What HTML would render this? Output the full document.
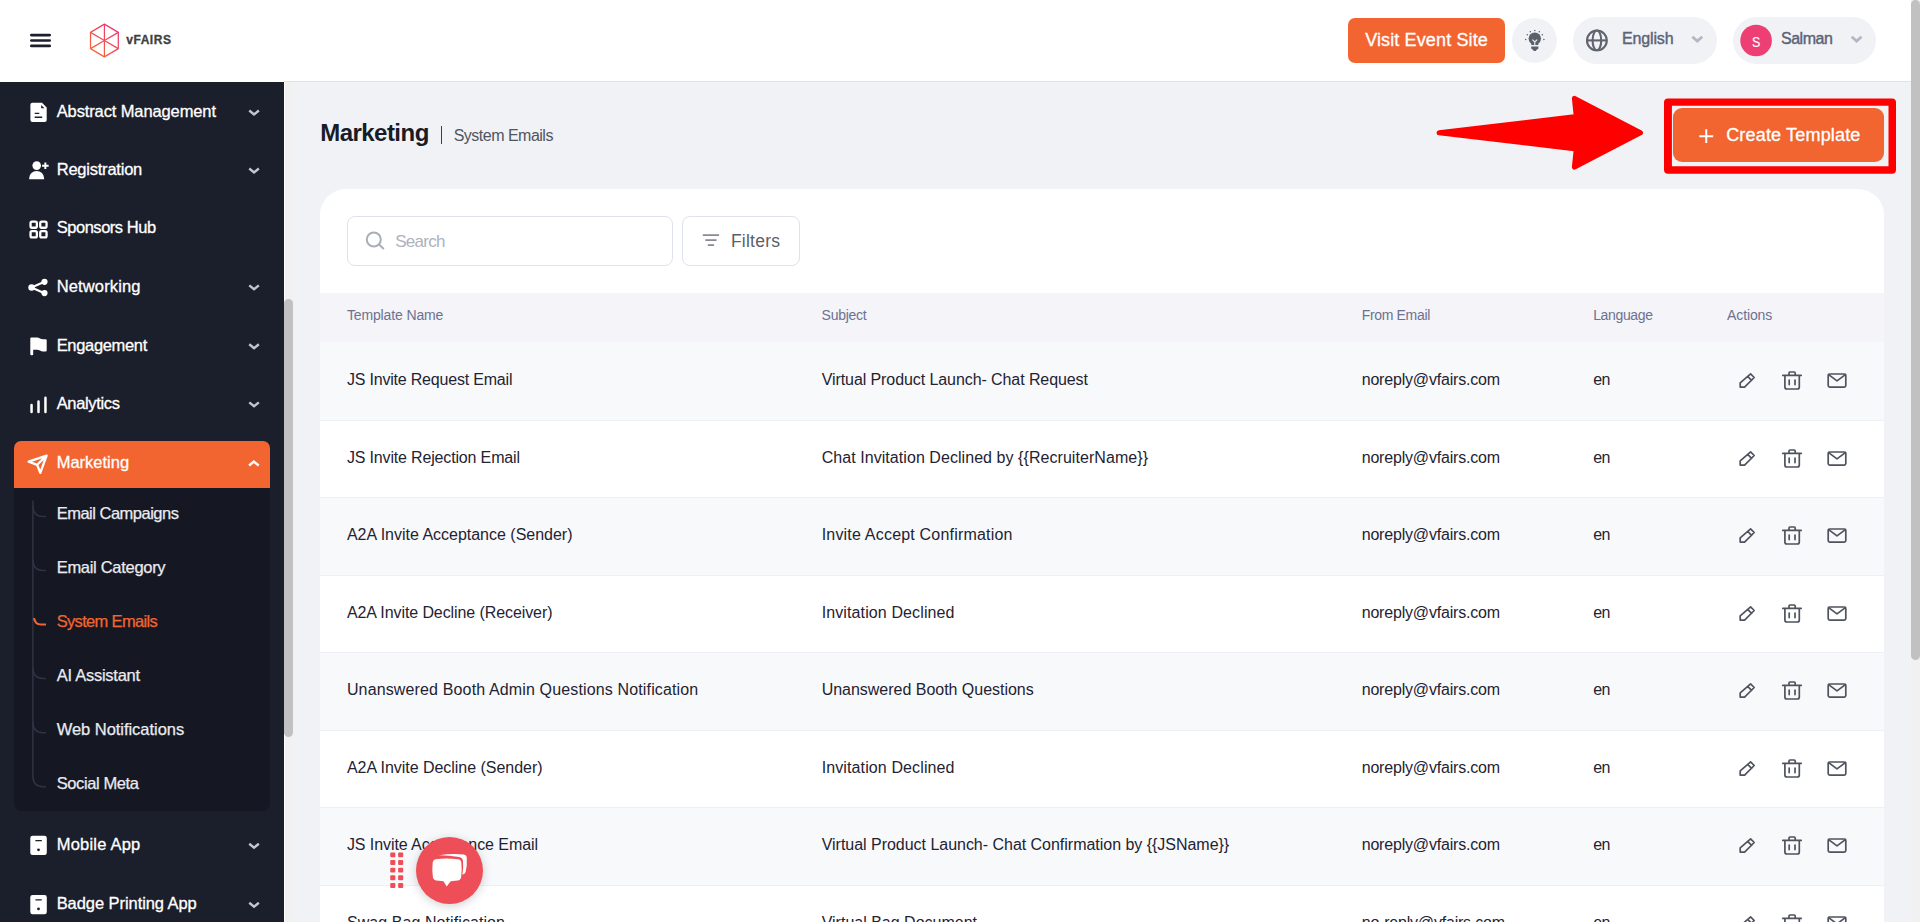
<!DOCTYPE html>
<html lang="en">
<head>
<meta charset="utf-8">
<title>Marketing | System Emails</title>
<style>
*{box-sizing:border-box;margin:0;padding:0}
html,body{width:1920px;height:922px;overflow:hidden;background:#f1f2f6;font-family:"Liberation Sans",sans-serif}
.abs,.t,.row{position:absolute}
.t{white-space:pre;display:block}
#page{position:relative;width:1920px;height:922px;overflow:hidden}
#header{left:0;top:0;width:1911px;height:82px;background:#fff}
#hborder{left:284px;top:81px;width:1627px;height:1px;background:#dfe2e8}
#sidebar{left:0;top:82px;width:284px;height:840px;background:#1b1e2b}
#sbtrack{left:284px;top:82px;width:9px;height:840px;background:#f1f1f1;border-left:1px solid #fff}
#sbthumb{left:284.4px;top:299px;width:8.6px;height:438px;background:#c1c1c1;border-radius:4.5px}
#vtrack{left:1911px;top:0;width:9px;height:922px;background:#f1f1f1}
#vthumb{left:1911px;top:0;width:9px;height:660px;background:#c1c1c1;border-radius:4.5px}
#mkt{left:14px;top:441px;width:256px;height:47px;background:#f26531;border-radius:7px 7px 0 0}
#submenu{left:14px;top:488px;width:256px;height:323px;background:#151823;border-radius:0 0 8px 8px}
#card{left:320px;top:189px;width:1564px;height:800px;background:#fff;border-radius:26px 26px 0 0}
#thead{left:320px;top:293px;width:1564px;height:49px;background:#f4f4f9}
.row{left:320px;width:1564px;border-top:1px solid #eef0f5}
#search{left:347px;top:216px;width:326px;height:50px;border:1px solid #dfe2ea;border-radius:8px;background:#fff}
#filters{left:682px;top:216px;width:118px;height:50px;border:1px solid #dfe2ea;border-radius:8px;background:#fff}
#visit{left:1348px;top:18px;width:157px;height:45px;background:#f26531;border-radius:7px}
#bulb{left:1512px;top:18px;width:45px;height:45px;background:#f1f2f6;border-radius:50%}
#lang{left:1573px;top:17px;width:144px;height:47px;background:#f1f2f6;border-radius:24px}
#user{left:1733px;top:17px;width:143px;height:47px;background:#f1f2f6;border-radius:24px}
#avatar{left:1740px;top:25px;width:32px;height:32px;background:#ee3f75;border-radius:50%}
#redbox{left:1664px;top:98px;width:232px;height:76px;border:8px solid #fe0000;border-radius:3px}
#create{left:1673px;top:108px;width:211px;height:54px;background:#f26531;border-radius:9px}
#sep{left:441px;top:126px;width:1px;height:18px;background:#3c3f4a}
#chat{left:416px;top:837px;width:67px;height:67px;background:#ee4e57;border-radius:50%;box-shadow:0 2px 10px rgba(40,40,60,.22)}
svg{position:absolute;overflow:visible}
</style>
</head>
<body>
<div id="page">
<!-- main scroll area background -->
<div class="abs" id="card"></div>
<div class="abs" id="thead"></div>
<div class="row" style="top:342px;height:78px;background:#f8f9fb;border-top:0;"></div>
<div class="row" style="top:420px;height:77px;background:#ffffff;"></div>
<div class="row" style="top:497px;height:78px;background:#f8f9fb;"></div>
<div class="row" style="top:575px;height:77px;background:#ffffff;"></div>
<div class="row" style="top:652px;height:78px;background:#f8f9fb;"></div>
<div class="row" style="top:730px;height:77px;background:#ffffff;"></div>
<div class="row" style="top:807px;height:78px;background:#f8f9fb;"></div>
<div class="row" style="top:885px;height:77px;background:#ffffff;"></div>

<div class="abs" id="search"></div>
<div class="abs" id="filters"></div>
<div class="abs" id="sep"></div>
<div class="abs" id="create"></div>

<!-- sidebar -->
<div class="abs" id="sidebar"></div>
<div class="abs" id="sbtrack"></div>
<div class="abs" id="sbthumb"></div>
<div class="abs" id="mkt"></div>
<div class="abs" id="submenu"></div>

<!-- header -->
<div class="abs" id="header"></div>
<div class="abs" id="hborder"></div>
<div class="abs" id="visit"></div>
<div class="abs" id="bulb"></div>
<div class="abs" id="lang"></div>
<div class="abs" id="user"></div>
<div class="abs" id="vtrack"></div>
<div class="abs" id="vthumb"></div>

<svg width="1920" height="922" viewBox="0 0 1920 922" style="left:0;top:0">
<defs><linearGradient id="lg" gradientUnits="userSpaceOnUse" x1="118" y1="26" x2="91" y2="55"><stop offset="0" stop-color="#ed2d7b"/><stop offset="1" stop-color="#f96c2c"/></linearGradient></defs>
<line x1="31.3" y1="35.1" x2="49.7" y2="35.1" stroke="#1b1e2b" stroke-width="2.6" stroke-linecap="round"/>
<line x1="31.3" y1="40.5" x2="49.7" y2="40.5" stroke="#1b1e2b" stroke-width="2.6" stroke-linecap="round"/>
<line x1="31.3" y1="45.9" x2="49.7" y2="45.9" stroke="#1b1e2b" stroke-width="2.6" stroke-linecap="round"/>
<g fill="none" stroke="url(#lg)" stroke-width="1.25" stroke-linejoin="round">
<polygon points="104.4,24.1 118.3,32.4 118.3,48.6 104.4,56.9 90.5,48.6 90.5,32.4"/>
<line x1="104.4" y1="40.5" x2="104.4" y2="24.1"/>
<line x1="104.4" y1="40.5" x2="118.3" y2="32.4"/>
<line x1="104.4" y1="40.5" x2="118.3" y2="48.6"/>
<line x1="104.4" y1="40.5" x2="104.4" y2="56.9"/>
<line x1="104.4" y1="40.5" x2="90.5" y2="48.6"/>
<line x1="104.4" y1="40.5" x2="90.5" y2="32.4"/>
</g>
<circle cx="1534.8" cy="38.6" r="6.2" fill="#5b606b"/>
<path d="M1531.3 43 h7 v2.2 h-7z" fill="#5b606b"/>
<path d="M1531.2 46.4 h7.2 v1.6 q0 1.2 -1.4 1.6 l-1.4 1.4 h-1.6 l-1.4 -1.4 q-1.4 -0.4 -1.4 -1.6z" fill="#5b606b"/>
<path d="M1532.4 39.6 l2.4 2.3 l2.4 -2.3 M1534.8 41.9 v3.6" fill="none" stroke="#f1f2f6" stroke-width="1.1"/>
<rect x="1530.6" y="45.05" width="8.4" height="0.9" fill="#f1f2f6"/>
<circle cx="1525.7" cy="39.4" r="0.75" fill="#5b606b"/>
<circle cx="1527.3" cy="34.8" r="0.75" fill="#5b606b"/>
<circle cx="1530.3" cy="31.7" r="0.75" fill="#5b606b"/>
<circle cx="1534.8" cy="30.6" r="0.75" fill="#5b606b"/>
<circle cx="1539.3" cy="31.7" r="0.75" fill="#5b606b"/>
<circle cx="1542.3" cy="34.8" r="0.75" fill="#5b606b"/>
<circle cx="1543.9" cy="39.4" r="0.75" fill="#5b606b"/>
<g fill="none" stroke="#5f646f" stroke-width="2.1"><circle cx="1596.9" cy="40.4" r="9.9"/><ellipse cx="1596.9" cy="40.4" rx="4.3" ry="9.9"/><line x1="1587" y1="40.4" x2="1606.8" y2="40.4"/></g>
<circle cx="1756.1" cy="40.5" r="15.8" fill="#ee3f75"/>
<path d="M1692.35 36.70 L1697.30 41.10 L1702.25 36.70" fill="none" stroke="#b1b7c3" stroke-width="2.7" stroke-linecap="butt" stroke-linejoin="miter"/>
<path d="M1851.65 36.70 L1856.60 41.10 L1861.55 36.70" fill="none" stroke="#b1b7c3" stroke-width="2.7" stroke-linecap="butt" stroke-linejoin="miter"/>
<path d="M32.4 102.8 H42 L46.7 107.6 V120 q0 2 -2 2 H32.4 q-2 0 -2 -2 V104.8 q0 -2 2 -2z" fill="#ffffff"/>
<path d="M41.2 105 V108.3 H44.5z" fill="#1b1e2b"/>
<path d="M34.7 113.4 H39.3 M34.7 117.3 H42.2" stroke="#1b1e2b" stroke-width="1.4" stroke-linecap="butt"/>
<circle cx="36.7" cy="165.6" r="4.3" fill="#ffffff"/>
<path d="M29.2 179.3 v-1.2 a7.45 7.1 0 0 1 14.9 0 v1.2z" fill="#ffffff"/>
<path d="M45.35 162.4 v6.6 M42.05 165.7 h6.6" stroke="#ffffff" stroke-width="2" stroke-linecap="butt"/>
<rect x="30.55" y="221.55" width="6.3" height="6.2" rx="1.4" fill="none" stroke="#ffffff" stroke-width="2.3"/>
<rect x="30.55" y="231.2" width="6.3" height="6.2" rx="1.4" fill="none" stroke="#ffffff" stroke-width="2.3"/>
<rect x="40.25" y="221.55" width="6.3" height="6.2" rx="1.4" fill="none" stroke="#ffffff" stroke-width="2.3"/>
<rect x="40.25" y="231.2" width="6.3" height="6.2" rx="1.4" fill="none" stroke="#ffffff" stroke-width="2.3"/>
<path d="M44.5 281.7 L31.5 287.45 L44.5 293.2" fill="none" stroke="#ffffff" stroke-width="2.2" stroke-linejoin="round"/>
<circle cx="31.6" cy="287.45" r="3.3" fill="#ffffff"/><circle cx="44.5" cy="281.8" r="3.1" fill="#ffffff"/><circle cx="44.5" cy="293.1" r="3.1" fill="#ffffff"/>
<path d="M30.3 338.6 q0 -1.1 1.1 -1.1 H37 q1.6 0 3 0.9 q1.4 0.8 3 0.8 H45.6 q1.1 0 1.1 1.1 V350.4 q0 1.1 -1.1 1.1 H43 q-1.6 0 -3 -0.9 q-1.4 -0.9 -3 -0.9 H33.2 V354.2 q0 1.1 -1.1 1.1 h-0.7 q-1.1 0 -1.1 -1.1z" fill="#ffffff"/>
<path d="M31.55 405 V412.1 M38.5 401.4 V412.1 M45.45 397.7 V412.1" stroke="#ffffff" stroke-width="2.5" stroke-linecap="round"/>
<path d="M46.6 455.6 L28.6 461.6 L37.2 464.8 L40.3 472.9 Z M46.6 455.6 L37.2 464.8" fill="none" stroke="#ffffff" stroke-width="2.3" stroke-linejoin="round" stroke-linecap="round"/>
<rect x="30.3" y="835.8" width="16.5" height="19.3" rx="2.3" fill="#ffffff"/>
<line x1="35.9" y1="840.7" x2="41.3" y2="840.7" stroke="#1b1e2b" stroke-width="1.3" stroke-linecap="round"/>
<circle cx="38.5" cy="849.8" r="1.4" fill="#1b1e2b"/>
<rect x="30.3" y="894.9" width="16.5" height="19.3" rx="2.3" fill="#ffffff"/>
<line x1="35.9" y1="899.8000000000001" x2="41.3" y2="899.8000000000001" stroke="#1b1e2b" stroke-width="1.3" stroke-linecap="round"/>
<circle cx="38.5" cy="908.9" r="1.4" fill="#1b1e2b"/>
<path d="M249.25 110.50 L254.05 114.40 L258.85 110.50" fill="none" stroke="#c3c6ce" stroke-width="2.4" stroke-linecap="butt" stroke-linejoin="miter"/>
<path d="M249.25 168.50 L254.05 172.40 L258.85 168.50" fill="none" stroke="#c3c6ce" stroke-width="2.4" stroke-linecap="butt" stroke-linejoin="miter"/>
<path d="M249.25 285.40 L254.05 289.30 L258.85 285.40" fill="none" stroke="#c3c6ce" stroke-width="2.4" stroke-linecap="butt" stroke-linejoin="miter"/>
<path d="M249.25 344.30 L254.05 348.20 L258.85 344.30" fill="none" stroke="#c3c6ce" stroke-width="2.4" stroke-linecap="butt" stroke-linejoin="miter"/>
<path d="M249.25 402.40 L254.05 406.30 L258.85 402.40" fill="none" stroke="#c3c6ce" stroke-width="2.4" stroke-linecap="butt" stroke-linejoin="miter"/>
<path d="M249.25 843.70 L254.05 847.60 L258.85 843.70" fill="none" stroke="#c3c6ce" stroke-width="2.4" stroke-linecap="butt" stroke-linejoin="miter"/>
<path d="M249.25 902.80 L254.05 906.70 L258.85 902.80" fill="none" stroke="#c3c6ce" stroke-width="2.4" stroke-linecap="butt" stroke-linejoin="miter"/>
<path d="M249.10 465.55 L253.90 461.65 L258.70 465.55" fill="none" stroke="#ffffff" stroke-width="2.4" stroke-linecap="butt" stroke-linejoin="miter"/>
<path d="M32.9 500.5 V776" fill="none" stroke="#2f3342" stroke-width="1.5"/>
<path d="M32.9 505.6 q0 11 10 11 H46" fill="none" stroke="#2f3342" stroke-width="1.5"/>
<path d="M32.9 559.6 q0 11 10 11 H46" fill="none" stroke="#2f3342" stroke-width="1.5"/>
<path d="M32.9 667.6 q0 11 10 11 H46" fill="none" stroke="#2f3342" stroke-width="1.5"/>
<path d="M32.9 721.7 q0 11 10 11 H46" fill="none" stroke="#2f3342" stroke-width="1.5"/>
<path d="M32.9 775.8 q0 11 10 11 H46" fill="none" stroke="#2f3342" stroke-width="1.5"/>
<path d="M34 618.1 q1.2 6.4 7 6.4 H46" fill="none" stroke="#f26531" stroke-width="2.2"/>
<g fill="none" stroke="#a9aebb" stroke-width="2" stroke-linecap="round"><circle cx="373.8" cy="239.5" r="7"/><line x1="379" y1="244.6" x2="383.3" y2="248.5"/></g>
<g stroke="#7c7f88" stroke-width="1.6"><line x1="702.8" y1="235.1" x2="719.1" y2="235.1"/><line x1="705.3" y1="240.1" x2="716.6" y2="240.1"/><line x1="707.8" y1="245.1" x2="714.1" y2="245.1"/></g>
<path d="M1706.25 129.2 V143.1 M1699.3 136.15 H1713.2" stroke="#fff" stroke-width="2"/>
<path d="M1439.2 132.75 L1576.35 116.6 L1574.5 98.45 L1640.4 132.75 L1574.5 167.05 L1576.35 148.9 Z" fill="#fe0000" stroke="#fe0000" stroke-width="5.2" stroke-linejoin="round"/>
<path fill-rule="evenodd" fill="#fe0000" d="M1668 98.4 H1892 q4 0 4 4 V169.8 q0 4 -4 4 H1668 q-4 0 -4 -4 V102.4 q0 -4 4 -4z M1671.9 105.7 V166.2 H1888.5 V105.7z"/>
<g transform="translate(0,0)" fill="none" stroke="#4f535e" stroke-width="1.7" stroke-linejoin="round" stroke-linecap="round">
<path d="M1750.6 373.9 L1754.2 377.5 L1744.6 387.1 H1740.2 V382.9 Z M1747.9 376.7 L1751.6 380.3"/>
<path d="M1782.8 375.4 H1801.2 M1789 375.2 V373.0 q0 -1 1 -1 H1794.2 q1 0 1 1 V375.2 M1784.9 375.6 V387 q0 2 2 2 H1797.3 q2 0 2 -2 V375.6 M1789.2 380 V384.6 M1795 380 V384.6"/>
<rect x="1828.2" y="374" width="17.6" height="13.2" rx="1.6"/><path d="M1828.6 374.6 L1837 380.9 L1845.4 374.6"/>
</g>
<g transform="translate(0,78)" fill="none" stroke="#4f535e" stroke-width="1.7" stroke-linejoin="round" stroke-linecap="round">
<path d="M1750.6 373.9 L1754.2 377.5 L1744.6 387.1 H1740.2 V382.9 Z M1747.9 376.7 L1751.6 380.3"/>
<path d="M1782.8 375.4 H1801.2 M1789 375.2 V373.0 q0 -1 1 -1 H1794.2 q1 0 1 1 V375.2 M1784.9 375.6 V387 q0 2 2 2 H1797.3 q2 0 2 -2 V375.6 M1789.2 380 V384.6 M1795 380 V384.6"/>
<rect x="1828.2" y="374" width="17.6" height="13.2" rx="1.6"/><path d="M1828.6 374.6 L1837 380.9 L1845.4 374.6"/>
</g>
<g transform="translate(0,155)" fill="none" stroke="#4f535e" stroke-width="1.7" stroke-linejoin="round" stroke-linecap="round">
<path d="M1750.6 373.9 L1754.2 377.5 L1744.6 387.1 H1740.2 V382.9 Z M1747.9 376.7 L1751.6 380.3"/>
<path d="M1782.8 375.4 H1801.2 M1789 375.2 V373.0 q0 -1 1 -1 H1794.2 q1 0 1 1 V375.2 M1784.9 375.6 V387 q0 2 2 2 H1797.3 q2 0 2 -2 V375.6 M1789.2 380 V384.6 M1795 380 V384.6"/>
<rect x="1828.2" y="374" width="17.6" height="13.2" rx="1.6"/><path d="M1828.6 374.6 L1837 380.9 L1845.4 374.6"/>
</g>
<g transform="translate(0,233)" fill="none" stroke="#4f535e" stroke-width="1.7" stroke-linejoin="round" stroke-linecap="round">
<path d="M1750.6 373.9 L1754.2 377.5 L1744.6 387.1 H1740.2 V382.9 Z M1747.9 376.7 L1751.6 380.3"/>
<path d="M1782.8 375.4 H1801.2 M1789 375.2 V373.0 q0 -1 1 -1 H1794.2 q1 0 1 1 V375.2 M1784.9 375.6 V387 q0 2 2 2 H1797.3 q2 0 2 -2 V375.6 M1789.2 380 V384.6 M1795 380 V384.6"/>
<rect x="1828.2" y="374" width="17.6" height="13.2" rx="1.6"/><path d="M1828.6 374.6 L1837 380.9 L1845.4 374.6"/>
</g>
<g transform="translate(0,310)" fill="none" stroke="#4f535e" stroke-width="1.7" stroke-linejoin="round" stroke-linecap="round">
<path d="M1750.6 373.9 L1754.2 377.5 L1744.6 387.1 H1740.2 V382.9 Z M1747.9 376.7 L1751.6 380.3"/>
<path d="M1782.8 375.4 H1801.2 M1789 375.2 V373.0 q0 -1 1 -1 H1794.2 q1 0 1 1 V375.2 M1784.9 375.6 V387 q0 2 2 2 H1797.3 q2 0 2 -2 V375.6 M1789.2 380 V384.6 M1795 380 V384.6"/>
<rect x="1828.2" y="374" width="17.6" height="13.2" rx="1.6"/><path d="M1828.6 374.6 L1837 380.9 L1845.4 374.6"/>
</g>
<g transform="translate(0,388)" fill="none" stroke="#4f535e" stroke-width="1.7" stroke-linejoin="round" stroke-linecap="round">
<path d="M1750.6 373.9 L1754.2 377.5 L1744.6 387.1 H1740.2 V382.9 Z M1747.9 376.7 L1751.6 380.3"/>
<path d="M1782.8 375.4 H1801.2 M1789 375.2 V373.0 q0 -1 1 -1 H1794.2 q1 0 1 1 V375.2 M1784.9 375.6 V387 q0 2 2 2 H1797.3 q2 0 2 -2 V375.6 M1789.2 380 V384.6 M1795 380 V384.6"/>
<rect x="1828.2" y="374" width="17.6" height="13.2" rx="1.6"/><path d="M1828.6 374.6 L1837 380.9 L1845.4 374.6"/>
</g>
<g transform="translate(0,465)" fill="none" stroke="#4f535e" stroke-width="1.7" stroke-linejoin="round" stroke-linecap="round">
<path d="M1750.6 373.9 L1754.2 377.5 L1744.6 387.1 H1740.2 V382.9 Z M1747.9 376.7 L1751.6 380.3"/>
<path d="M1782.8 375.4 H1801.2 M1789 375.2 V373.0 q0 -1 1 -1 H1794.2 q1 0 1 1 V375.2 M1784.9 375.6 V387 q0 2 2 2 H1797.3 q2 0 2 -2 V375.6 M1789.2 380 V384.6 M1795 380 V384.6"/>
<rect x="1828.2" y="374" width="17.6" height="13.2" rx="1.6"/><path d="M1828.6 374.6 L1837 380.9 L1845.4 374.6"/>
</g>
<g transform="translate(0,543)" fill="none" stroke="#4f535e" stroke-width="1.7" stroke-linejoin="round" stroke-linecap="round">
<path d="M1750.6 373.9 L1754.2 377.5 L1744.6 387.1 H1740.2 V382.9 Z M1747.9 376.7 L1751.6 380.3"/>
<path d="M1782.8 375.4 H1801.2 M1789 375.2 V373.0 q0 -1 1 -1 H1794.2 q1 0 1 1 V375.2 M1784.9 375.6 V387 q0 2 2 2 H1797.3 q2 0 2 -2 V375.6 M1789.2 380 V384.6 M1795 380 V384.6"/>
<rect x="1828.2" y="374" width="17.6" height="13.2" rx="1.6"/><path d="M1828.6 374.6 L1837 380.9 L1845.4 374.6"/>
</g>
</svg>

<span class="t" style="left:56.7px;top:100.78px;font-size:16.5px;line-height:21px;letter-spacing:-0.118px;color:#ffffff;-webkit-text-stroke:0.3px #ffffff;">Abstract Management</span>
<span class="t" style="left:56.7px;top:158.78px;font-size:16.5px;line-height:21px;letter-spacing:-0.222px;color:#ffffff;-webkit-text-stroke:0.3px #ffffff;">Registration</span>
<span class="t" style="left:56.7px;top:217.48px;font-size:16.5px;line-height:21px;letter-spacing:-0.469px;color:#ffffff;-webkit-text-stroke:0.3px #ffffff;">Sponsors Hub</span>
<span class="t" style="left:56.7px;top:275.68px;font-size:16.5px;line-height:21px;letter-spacing:0.139px;color:#ffffff;-webkit-text-stroke:0.3px #ffffff;">Networking</span>
<span class="t" style="left:56.7px;top:334.58px;font-size:16.5px;line-height:21px;letter-spacing:-0.331px;color:#ffffff;-webkit-text-stroke:0.3px #ffffff;">Engagement</span>
<span class="t" style="left:56.7px;top:392.68px;font-size:16.5px;line-height:21px;letter-spacing:-0.354px;color:#ffffff;-webkit-text-stroke:0.3px #ffffff;">Analytics</span>
<span class="t" style="left:56.7px;top:451.58px;font-size:16.5px;line-height:21px;letter-spacing:-0.007px;color:#ffffff;-webkit-text-stroke:0.3px #ffffff;">Marketing</span>
<span class="t" style="left:56.7px;top:833.98px;font-size:16.5px;line-height:21px;letter-spacing:0.207px;color:#ffffff;-webkit-text-stroke:0.3px #ffffff;">Mobile App</span>
<span class="t" style="left:56.7px;top:893.08px;font-size:16.5px;line-height:21px;letter-spacing:-0.069px;color:#ffffff;-webkit-text-stroke:0.3px #ffffff;">Badge Printing App</span>
<span class="t" style="left:56.7px;top:502.88px;font-size:16.5px;line-height:21px;letter-spacing:-0.508px;color:#e9ebf1;-webkit-text-stroke:0.25px #e9ebf1;">Email Campaigns</span>
<span class="t" style="left:56.7px;top:556.88px;font-size:16.5px;line-height:21px;letter-spacing:-0.300px;color:#e9ebf1;-webkit-text-stroke:0.25px #e9ebf1;">Email Category</span>
<span class="t" style="left:56.7px;top:610.88px;font-size:16.5px;line-height:21px;letter-spacing:-0.667px;color:#f26531;-webkit-text-stroke:0.25px #f26531;">System Emails</span>
<span class="t" style="left:56.7px;top:664.88px;font-size:16.5px;line-height:21px;letter-spacing:-0.256px;color:#e9ebf1;-webkit-text-stroke:0.25px #e9ebf1;">AI Assistant</span>
<span class="t" style="left:56.7px;top:718.98px;font-size:16.5px;line-height:21px;letter-spacing:-0.037px;color:#e9ebf1;-webkit-text-stroke:0.25px #e9ebf1;">Web Notifications</span>
<span class="t" style="left:56.7px;top:773.08px;font-size:16.5px;line-height:21px;letter-spacing:-0.402px;color:#e9ebf1;-webkit-text-stroke:0.25px #e9ebf1;">Social Meta</span>
<span class="t" style="left:1365.2px;top:28.86px;font-size:18px;line-height:22px;letter-spacing:0.124px;color:#ffffff;-webkit-text-stroke:0.3px #ffffff;">Visit Event Site</span>
<span class="t" style="left:1621.9px;top:28.56px;font-size:16px;line-height:20px;letter-spacing:-0.131px;color:#5b6376;-webkit-text-stroke:0.4px #5b6376;">English</span>
<span class="t" style="left:1780.9px;top:28.56px;font-size:16px;line-height:20px;letter-spacing:-0.430px;color:#5b6376;-webkit-text-stroke:0.4px #5b6376;">Salman</span>
<span class="t" style="left:1752.3px;top:31.93px;font-size:15.5px;line-height:19px;letter-spacing:0.000px;color:#ffffff;transform:scaleX(0.8);transform-origin:0 0;-webkit-text-stroke:0.15px #ffffff;">S</span>
<span class="t" style="left:126.3px;top:33.24px;font-size:12px;line-height:15px;letter-spacing:0.517px;color:#404040;font-weight:700;-webkit-text-stroke:0.3px #404040;">vFAIRS</span>
<span class="t" style="left:320.2px;top:118.18px;font-size:24px;line-height:30px;letter-spacing:-0.532px;color:#181b28;font-weight:700;">Marketing</span>
<span class="t" style="left:453.7px;top:125.86px;font-size:16px;line-height:20px;letter-spacing:-0.508px;color:#50545f;">System Emails</span>
<span class="t" style="left:1726.2px;top:124.16px;font-size:18px;line-height:22px;letter-spacing:0.175px;color:#ffffff;-webkit-text-stroke:0.3px #ffffff;">Create Template</span>
<span class="t" style="left:395.2px;top:230.91px;font-size:17px;line-height:21px;letter-spacing:-0.735px;color:#adb2bf;">Search</span>
<span class="t" style="left:730.9px;top:230.24px;font-size:17.5px;line-height:22px;letter-spacing:0.243px;color:#5a5f6c;">Filters</span>
<span class="t" style="left:346.9px;top:306.15px;font-size:14px;line-height:18px;letter-spacing:-0.129px;color:#6d7190;">Template Name</span>
<span class="t" style="left:821.6px;top:306.15px;font-size:14px;line-height:18px;letter-spacing:-0.284px;color:#6d7190;">Subject</span>
<span class="t" style="left:1361.7px;top:306.15px;font-size:14px;line-height:18px;letter-spacing:-0.329px;color:#6d7190;">From Email</span>
<span class="t" style="left:1593.2px;top:306.15px;font-size:14px;line-height:18px;letter-spacing:-0.357px;color:#6d7190;">Language</span>
<span class="t" style="left:1727.0px;top:306.15px;font-size:14px;line-height:18px;letter-spacing:-0.104px;color:#6d7190;">Actions</span>
<span class="t" style="left:346.9px;top:369.76px;font-size:16px;line-height:20px;letter-spacing:-0.194px;color:#1f2332;">JS Invite Request Email</span>
<span class="t" style="left:821.7px;top:369.76px;font-size:16px;line-height:20px;letter-spacing:-0.083px;color:#1f2332;">Virtual Product Launch- Chat Request</span>
<span class="t" style="left:1361.7px;top:369.76px;font-size:16px;line-height:20px;letter-spacing:-0.190px;color:#1f2332;">noreply@vfairs.com</span>
<span class="t" style="left:1593.2px;top:369.76px;font-size:16px;line-height:20px;letter-spacing:-0.597px;color:#1f2332;">en</span>
<span class="t" style="left:346.9px;top:447.76px;font-size:16px;line-height:20px;letter-spacing:-0.161px;color:#1f2332;">JS Invite Rejection Email</span>
<span class="t" style="left:821.7px;top:447.76px;font-size:16px;line-height:20px;letter-spacing:0.058px;color:#1f2332;">Chat Invitation Declined by {{RecruiterName}}</span>
<span class="t" style="left:1361.7px;top:447.76px;font-size:16px;line-height:20px;letter-spacing:-0.190px;color:#1f2332;">noreply@vfairs.com</span>
<span class="t" style="left:1593.2px;top:447.76px;font-size:16px;line-height:20px;letter-spacing:-0.597px;color:#1f2332;">en</span>
<span class="t" style="left:346.9px;top:524.76px;font-size:16px;line-height:20px;letter-spacing:-0.011px;color:#1f2332;">A2A Invite Acceptance (Sender)</span>
<span class="t" style="left:821.7px;top:524.76px;font-size:16px;line-height:20px;letter-spacing:0.197px;color:#1f2332;">Invite Accept Confirmation</span>
<span class="t" style="left:1361.7px;top:524.76px;font-size:16px;line-height:20px;letter-spacing:-0.190px;color:#1f2332;">noreply@vfairs.com</span>
<span class="t" style="left:1593.2px;top:524.76px;font-size:16px;line-height:20px;letter-spacing:-0.597px;color:#1f2332;">en</span>
<span class="t" style="left:346.9px;top:602.76px;font-size:16px;line-height:20px;letter-spacing:-0.089px;color:#1f2332;">A2A Invite Decline (Receiver)</span>
<span class="t" style="left:821.7px;top:602.76px;font-size:16px;line-height:20px;letter-spacing:0.114px;color:#1f2332;">Invitation Declined</span>
<span class="t" style="left:1361.7px;top:602.76px;font-size:16px;line-height:20px;letter-spacing:-0.190px;color:#1f2332;">noreply@vfairs.com</span>
<span class="t" style="left:1593.2px;top:602.76px;font-size:16px;line-height:20px;letter-spacing:-0.597px;color:#1f2332;">en</span>
<span class="t" style="left:346.9px;top:679.76px;font-size:16px;line-height:20px;letter-spacing:0.143px;color:#1f2332;">Unanswered Booth Admin Questions Notification</span>
<span class="t" style="left:821.7px;top:679.76px;font-size:16px;line-height:20px;letter-spacing:-0.021px;color:#1f2332;">Unanswered Booth Questions</span>
<span class="t" style="left:1361.7px;top:679.76px;font-size:16px;line-height:20px;letter-spacing:-0.190px;color:#1f2332;">noreply@vfairs.com</span>
<span class="t" style="left:1593.2px;top:679.76px;font-size:16px;line-height:20px;letter-spacing:-0.597px;color:#1f2332;">en</span>
<span class="t" style="left:346.9px;top:757.76px;font-size:16px;line-height:20px;letter-spacing:-0.036px;color:#1f2332;">A2A Invite Decline (Sender)</span>
<span class="t" style="left:821.7px;top:757.76px;font-size:16px;line-height:20px;letter-spacing:0.114px;color:#1f2332;">Invitation Declined</span>
<span class="t" style="left:1361.7px;top:757.76px;font-size:16px;line-height:20px;letter-spacing:-0.190px;color:#1f2332;">noreply@vfairs.com</span>
<span class="t" style="left:1593.2px;top:757.76px;font-size:16px;line-height:20px;letter-spacing:-0.597px;color:#1f2332;">en</span>
<span class="t" style="left:346.9px;top:834.76px;font-size:16px;line-height:20px;letter-spacing:-0.075px;color:#1f2332;">JS Invite Acceptance Email</span>
<span class="t" style="left:821.7px;top:834.76px;font-size:16px;line-height:20px;letter-spacing:-0.024px;color:#1f2332;">Virtual Product Launch- Chat Confirmation by {{JSName}}</span>
<span class="t" style="left:1361.7px;top:834.76px;font-size:16px;line-height:20px;letter-spacing:-0.190px;color:#1f2332;">noreply@vfairs.com</span>
<span class="t" style="left:1593.2px;top:834.76px;font-size:16px;line-height:20px;letter-spacing:-0.597px;color:#1f2332;">en</span>
<span class="t" style="left:346.9px;top:912.76px;font-size:16px;line-height:20px;letter-spacing:0.078px;color:#1f2332;">Swag Bag Notification</span>
<span class="t" style="left:821.7px;top:912.76px;font-size:16px;line-height:20px;letter-spacing:-0.002px;color:#1f2332;">Virtual Bag Document</span>
<span class="t" style="left:1361.7px;top:912.76px;font-size:16px;line-height:20px;letter-spacing:-0.203px;color:#1f2332;">no-reply@vfairs.com</span>
<span class="t" style="left:1593.2px;top:912.76px;font-size:16px;line-height:20px;letter-spacing:-0.597px;color:#1f2332;">en</span>

<div class="abs" id="chat"></div>
<!--OVERLAY-->
<svg width="1920" height="922" viewBox="0 0 1920 922" style="left:0;top:0">
<rect x="390.25" y="852.4" width="5.1" height="4.9" rx="1" fill="#ee4e57"/>
<rect x="390.25" y="860.05" width="5.1" height="4.9" rx="1" fill="#ee4e57"/>
<rect x="390.25" y="867.7" width="5.1" height="4.9" rx="1" fill="#ee4e57"/>
<rect x="390.25" y="875.35" width="5.1" height="4.9" rx="1" fill="#ee4e57"/>
<rect x="390.25" y="883.0" width="5.1" height="4.9" rx="1" fill="#ee4e57"/>
<rect x="398.1" y="852.4" width="5.1" height="4.9" rx="1" fill="#ee4e57"/>
<rect x="398.1" y="860.05" width="5.1" height="4.9" rx="1" fill="#ee4e57"/>
<rect x="398.1" y="867.7" width="5.1" height="4.9" rx="1" fill="#ee4e57"/>
<rect x="398.1" y="875.35" width="5.1" height="4.9" rx="1" fill="#ee4e57"/>
<rect x="398.1" y="883.0" width="5.1" height="4.9" rx="1" fill="#ee4e57"/>
<path d="M438.8 855.2 q14 -2.2 25 -0.6 q3 0.5 3 3.5 q0.4 8 -1.2 14 q-0.5 2 -2.6 2.3 l-0.6 0 q1.2 -7 0.6 -13.5 q-0.4 -3.6 -4 -4 q-10 -1.6 -20.2 -1.7z" fill="#fff"/>
<path d="M435.5 859.2 q11 -1.4 22.5 0 q3 0.4 3.3 3.4 q0.9 7 -0.2 14.6 q-0.5 3 -3.5 3.4 l-6.9 0.6 l-4 5.2 l-3.2 -5.2 l-7 -0.6 q-3 -0.4 -3.6 -3.4 q-1.1 -7 -0.2 -14.6 q0.3 -3 2.8 -3.4z" fill="#fff"/>
</svg>
</div>
</body>
</html>
